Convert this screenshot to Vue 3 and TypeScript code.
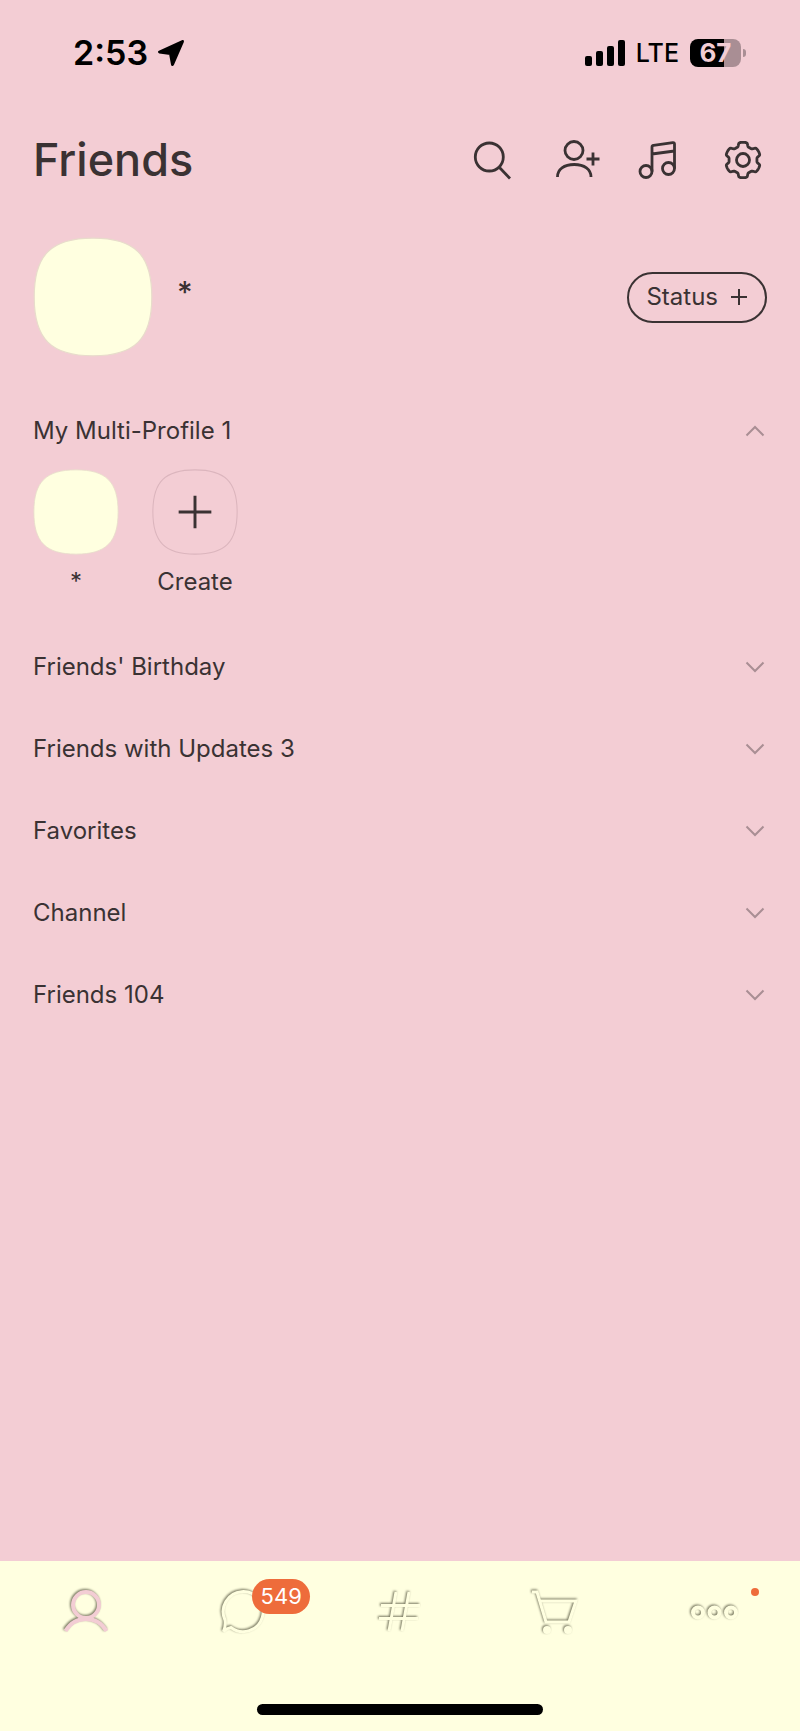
<script setup lang="ts">
import { ref } from 'vue'

interface Section {
  title: string
}

const sections: Section[] = [
  { title: "Friends' Birthday" },
  { title: 'Friends with Updates 3' },
  { title: 'Favorites' },
  { title: 'Channel' },
  { title: 'Friends 104' },
]

const multiProfileOpen = ref(true)

const squircle =
  'M50 1 C85 1 99 15 99 50 S85 99 50 99 S1 85 1 50 S15 1 50 1 Z'

// Six-lobed outline, sampled around the centre of a 48 unit box.
function gearOutline(): string {
  const points: string[] = []
  for (let i = 0; i < 180; i++) {
    const angle = (i / 180) * Math.PI * 2
    const lobe = Math.tanh(-3 * Math.cos(6 * angle) + 0.6)
    const radius = 15.8 + 1.9 * lobe
    const x = 24 + radius * Math.cos(angle)
    const y = 24 + radius * Math.sin(angle)
    points.push(`${x.toFixed(2)} ${y.toFixed(2)}`)
  }
  return `M${points.join('L')}Z`
}

const gearPath = gearOutline()
</script>

<template>
  <div class="screen">
    <div class="status-bar">
      <div class="clock">
        <span>2:53</span>
        <svg class="location" viewBox="0 0 28 28" aria-hidden="true">
          <path d="M25.500 2.500 L2.500 13 L13.500 14.500 L15.500 25.500 Z" />
        </svg>
      </div>
      <div class="signals">
        <svg class="bars" viewBox="0 0 40 26" aria-hidden="true">
          <rect x="0" y="16" width="7" height="10" rx="2" />
          <rect x="11" y="11" width="7" height="15" rx="2" />
          <rect x="22" y="6" width="7" height="20" rx="2" />
          <rect x="33" y="0" width="7" height="26" rx="2" />
        </svg>
        <span class="network">LTE</span>
        <div class="battery"><span>67</span></div>
      </div>
    </div>

    <header class="header">
      <h1>Friends</h1>
      <div class="actions">
        <button type="button" aria-label="Search">
          <svg class="icon" viewBox="0 0 48 48">
            <circle cx="22.300" cy="21" r="14" />
            <path d="M32 31 L43 42.500" />
          </svg>
        </button>
        <button type="button" aria-label="Add friend">
          <svg class="icon" viewBox="0 0 48 48">
            <circle cx="23" cy="14.500" r="9" />
            <path d="M6.500 41 C6.500 33.500 13 28.500 23.200 28.500 S40 33.500 40 41" />
            <path d="M35.500 23 H48.500 M42 16.500 V29.500" />
          </svg>
        </button>
        <button type="button" aria-label="Music">
          <svg class="icon" viewBox="0 0 48 48">
            <circle cx="11" cy="35.500" r="6" />
            <circle cx="33.500" cy="32.500" r="6" />
            <path
              d="M17 35.500 V11 Q17 9.500 18.500 9.300 L37.800 6.700 Q39.500 6.500 39.500 8 V32.500 M17 18 L39.500 15"
            />
          </svg>
        </button>
        <button type="button" aria-label="Settings">
          <svg class="icon" viewBox="0 0 48 48">
            <path :d="gearPath" />
            <circle cx="24" cy="24" r="6.500" />
          </svg>
        </button>
      </div>
    </header>

    <main>
      <section class="me">
        <svg class="avatar-large" viewBox="0 0 100 100" aria-hidden="true">
          <path class="photo" :d="squircle" />
        </svg>
        <span class="my-name">*</span>
        <button type="button" class="status-button">
          <span>Status</span>
          <svg viewBox="0 0 18 18" aria-hidden="true"><path d="M1 9 H17 M9 1 V17" /></svg>
        </button>
      </section>

      <section>
        <button
          type="button"
          class="section-row"
          :aria-expanded="multiProfileOpen"
          @click="multiProfileOpen = !multiProfileOpen"
        >
          <span>My Multi-Profile 1</span>
          <svg class="chevron" :class="{ up: multiProfileOpen }" viewBox="0 0 20 12" aria-hidden="true">
            <path d="M1.500 1.500 L10 10 L18.500 1.500" />
          </svg>
        </button>
        <div v-if="multiProfileOpen" class="profiles">
          <button type="button" class="profile">
            <svg viewBox="0 0 100 100" aria-hidden="true">
              <path class="photo" :d="squircle" />
            </svg>
            <span>*</span>
          </button>
          <button type="button" class="profile">
            <svg viewBox="0 0 100 100" aria-hidden="true">
              <path class="empty" :d="squircle" />
              <path class="plus" d="M31 50 H69 M50 31 V69" />
            </svg>
            <span>Create</span>
          </button>
        </div>
      </section>

      <section v-for="section in sections" :key="section.title">
        <button type="button" class="section-row">
          <span>{{ section.title }}</span>
          <svg class="chevron" viewBox="0 0 20 12" aria-hidden="true">
            <path d="M1.500 1.500 L10 10 L18.500 1.500" />
          </svg>
        </button>
      </section>
    </main>

    <nav class="tab-bar">
      <div class="tabs">
        <a href="#friends" aria-label="Friends" aria-current="page">
          <svg class="tab-icon current" viewBox="0 0 48 48">
            <circle cx="24" cy="17" r="13" />
            <path d="M3.500 43 C8 35.500 15.500 31 24 31 S40 35.500 44.500 43" />
          </svg>
        </a>
        <a href="#chats" aria-label="Chats">
          <svg class="tab-icon" viewBox="0 0 48 48">
            <path d="M6 32 A20 20 0 1 1 12 39.500 Q8 40 4.500 43.500 Q7 37 6 32 Z" />
          </svg>
          <span class="badge">549</span>
        </a>
        <a href="#open" aria-label="Open chat">
          <svg class="tab-icon" viewBox="0 0 48 48">
            <path d="M20 4 L13 43 M33 4 L26 43 M5 17.500 H44 M3 30.500 H42" />
          </svg>
        </a>
        <a href="#shopping" aria-label="Shopping">
          <svg class="tab-icon" viewBox="0 0 48 48">
            <path d="M-1 4 H4 L13 34 H36 L43 13 H7" />
            <circle class="solid" cx="14" cy="42" r="4" />
            <circle class="solid" cx="35" cy="42" r="4" />
          </svg>
        </a>
        <a href="#more" aria-label="More">
          <svg class="tab-icon dots" viewBox="0 0 48 48">
            <circle cx="8" cy="24.500" r="5" />
            <circle cx="24.500" cy="24.500" r="5" />
            <circle cx="41" cy="24.500" r="5" />
          </svg>
          <span class="dot"></span>
        </a>
      </div>
      <div class="home-indicator"></div>
    </nav>
  </div>
</template>

<style>
body {
  margin: 0;
  background: #f3cdd4;
}
</style>

<style scoped>
.screen {
  display: flex;
  flex-direction: column;
  min-height: 100vh;
  background: #f3cdd4;
  color: #3a3233;
  font-family: Inter, "Liberation Sans", sans-serif;
  font-size: 24px;
  line-height: 32px;
}

button {
  padding: 0;
  border: 0;
  background: none;
  color: inherit;
  font: inherit;
  cursor: pointer;
}

svg {
  display: block;
  flex: none;
  overflow: visible;
  fill: none;
}

.status-bar {
  display: flex;
  align-items: center;
  justify-content: space-between;
  height: 106px;
  padding: 0 54px 0 73px;
  color: #000;
}

.clock {
  display: flex;
  align-items: center;
  gap: 9px;
  font-size: 34px;
  font-weight: 600;
}

.location {
  width: 28px;
  height: 28px;
  fill: #000;
  stroke: #000;
  stroke-width: 3;
  stroke-linejoin: round;
}

.signals {
  display: flex;
  align-items: center;
}

.bars {
  width: 40px;
  height: 26px;
  fill: #000;
}

.network {
  margin: 0 11px;
  font-size: 25px;
  font-weight: 500;
}

.battery {
  position: relative;
  width: 51px;
  height: 28px;
  margin-right: 5px;
  border-radius: 8px;
  background: linear-gradient(90deg, #000 67%, #a98e94 67%);
  color: #f3cdd4;
  font-size: 26px;
  font-weight: 700;
  line-height: 28px;
  text-align: center;
}

.battery::after {
  content: "";
  position: absolute;
  top: 10px;
  right: -5px;
  width: 3px;
  height: 8px;
  border-radius: 0 4px 4px 0;
  background: #a98e94;
}

.header {
  display: flex;
  align-items: center;
  justify-content: space-between;
  padding: 30px 33px 0;
}

h1 {
  margin: 0;
  font-size: 45px;
  font-weight: 500;
  line-height: 48px;
}

.actions {
  display: flex;
  gap: 36px;
}

.icon {
  width: 48px;
  height: 48px;
  stroke: #3a3233;
  stroke-width: 2.8;
}

.me {
  display: flex;
  align-items: center;
  padding: 53px 33px 33px;
}

.avatar-large {
  width: 120px;
  height: 120px;
}

.photo {
  fill: #ffffe0;
  stroke: #e8dccb;
  stroke-width: 1;
}

.my-name {
  flex: 1;
  margin-left: 24px;
  padding-bottom: 10px;
  font-size: 30px;
  font-weight: 500;
}

.status-button {
  display: flex;
  align-items: center;
  gap: 12px;
  height: 51px;
  padding: 0 17px;
  border: 2px solid #3a3233;
  border-radius: 26px;
}

.status-button svg {
  width: 18px;
  height: 18px;
  stroke: #3a3233;
  stroke-width: 2;
}

.section-row {
  display: flex;
  align-items: center;
  justify-content: space-between;
  width: 100%;
  height: 82px;
  padding: 0 35px 0 33px;
  text-align: left;
}

.chevron {
  width: 20px;
  height: 12px;
  stroke: #a98e94;
  stroke-width: 2;
}

.chevron.up {
  transform: rotate(180deg);
}

.profiles {
  display: flex;
  gap: 33px;
  margin-top: -3px;
  padding: 0 33px 28px;
}

.profile {
  display: flex;
  flex-direction: column;
  align-items: center;
  gap: 11px;
  width: 86px;
}

.profile svg {
  width: 86px;
  height: 86px;
}

.empty {
  stroke: #dbb5bd;
  stroke-width: 1.2;
}

.plus {
  stroke: #3a3233;
  stroke-width: 3.4;
}

.tab-bar {
  display: flex;
  flex-direction: column;
  align-items: center;
  gap: 68px;
  margin-top: auto;
  padding: 27px 0 16px;
  background: #ffffe0;
}

.tabs {
  display: grid;
  grid-template-columns: repeat(5, 1fr);
  justify-items: center;
  box-sizing: border-box;
  width: 100%;
  padding: 0 8px;
}

.tabs a {
  position: relative;
  color: inherit;
  text-decoration: none;
}

.tab-icon {
  width: 48px;
  height: 48px;
  stroke: #ffffe0;
  stroke-width: 3;
  filter: drop-shadow(-1px -1px 1px #77775f);
}

.tab-icon.current {
  stroke: #f3cdd4;
  stroke-width: 4;
}

.tab-icon.dots {
  stroke-width: 4;
}

.solid {
  fill: #ffffe0;
  stroke: none;
}

.badge {
  position: absolute;
  top: -9px;
  left: 33px;
  width: 58px;
  height: 35px;
  border-radius: 18px;
  background: #ee6c3b;
  color: #fff;
  font-size: 22px;
  line-height: 35px;
  text-align: center;
}

.dot {
  position: absolute;
  top: 0;
  left: 61px;
  width: 8px;
  height: 8px;
  border-radius: 50%;
  background: #ee6c3b;
}

.home-indicator {
  width: 36%;
  max-width: 286px;
  height: 11px;
  border-radius: 6px;
  background: #000;
}
</style>
